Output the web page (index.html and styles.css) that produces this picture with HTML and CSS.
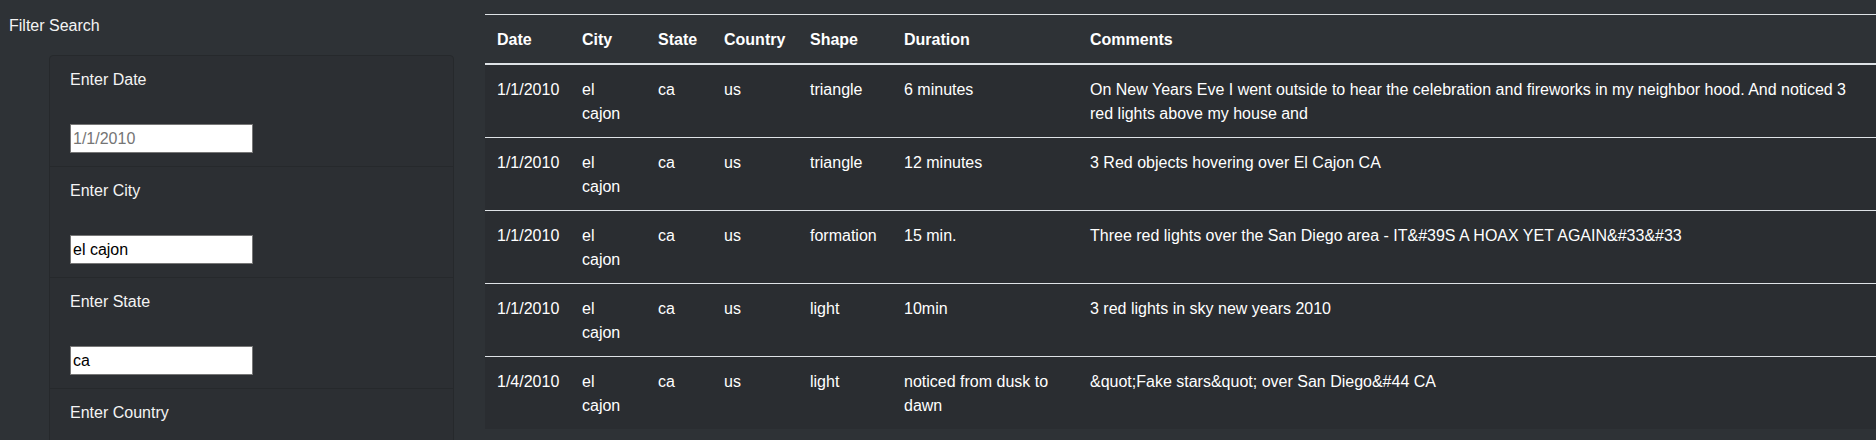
FILE: index.html
```html
<!DOCTYPE html>
<html lang="en">
<head>
<meta charset="utf-8">
<title>UFO Sightings</title>
<link rel="stylesheet" href="styles.css">
</head>
<body>
<div class="page">
  <aside class="sidebar">
    <h2 class="sidebar-title">Filter Search</h2>
    <ul class="filter-list">
      <li class="filter-item">
        <label class="filter-label" for="datetime">Enter Date</label>
        <input class="filter-input" id="datetime" type="text" placeholder="1/1/2010">
      </li>
      <li class="filter-item">
        <label class="filter-label" for="city">Enter City</label>
        <input class="filter-input" id="city" type="text" value="el cajon">
      </li>
      <li class="filter-item">
        <label class="filter-label" for="state">Enter State</label>
        <input class="filter-input" id="state" type="text" value="ca">
      </li>
      <li class="filter-item">
        <label class="filter-label" for="country">Enter Country</label>
        <input class="filter-input" id="country" type="text">
      </li>
    </ul>
  </aside>
  <main class="results">
    <table class="ufo-table">
      <colgroup>
        <col class="col-date">
        <col class="col-city">
        <col class="col-state">
        <col class="col-country">
        <col class="col-shape">
        <col class="col-duration">
        <col class="col-comments">
      </colgroup>
      <thead>
        <tr>
          <th>Date</th>
          <th>City</th>
          <th>State</th>
          <th>Country</th>
          <th>Shape</th>
          <th>Duration</th>
          <th>Comments</th>
        </tr>
      </thead>
      <tbody>
        <tr>
          <td>1/1/2010</td>
          <td>el cajon</td>
          <td>ca</td>
          <td>us</td>
          <td>triangle</td>
          <td>6 minutes</td>
          <td>On New Years Eve I went outside to hear the celebration and fireworks in my neighbor hood. And noticed 3 red lights above my house and</td>
        </tr>
        <tr>
          <td>1/1/2010</td>
          <td>el cajon</td>
          <td>ca</td>
          <td>us</td>
          <td>triangle</td>
          <td>12 minutes</td>
          <td>3 Red objects hovering over El Cajon CA</td>
        </tr>
        <tr>
          <td>1/1/2010</td>
          <td>el cajon</td>
          <td>ca</td>
          <td>us</td>
          <td>formation</td>
          <td>15 min.</td>
          <td>Three red lights over the San Diego area - IT&amp;#39S A HOAX YET AGAIN&amp;#33&amp;#33</td>
        </tr>
        <tr>
          <td>1/1/2010</td>
          <td>el cajon</td>
          <td>ca</td>
          <td>us</td>
          <td>light</td>
          <td>10min</td>
          <td>3 red lights in sky new years 2010</td>
        </tr>
        <tr>
          <td>1/4/2010</td>
          <td>el cajon</td>
          <td>ca</td>
          <td>us</td>
          <td>light</td>
          <td>noticed from dusk to dawn</td>
          <td>&amp;quot;Fake stars&amp;quot; over San Diego&amp;#44 CA</td>
        </tr>
      </tbody>
    </table>
  </main>
</div>
</body>
</html>
```

FILE: styles.css
```css
* {
  box-sizing: border-box;
}

html, body {
  margin: 0;
  padding: 0;
}

body {
  background: #2e3236;
  color: #ffffff;
  font-family: "Liberation Sans", Arial, Helvetica, sans-serif;
  font-size: 16px;
  line-height: 24px;
  overflow: hidden;
}

.page {
  display: flex;
  align-items: flex-start;
}

.sidebar {
  flex: none;
  width: 485px;
  padding-top: 14px;
}

.sidebar-title {
  margin: 0 0 17px 9px;
  font-size: 16px;
  font-weight: normal;
  line-height: 24px;
  color: #f4f4f4;
}

.filter-list {
  list-style: none;
  margin: 0 0 0 49px;
  padding: 0;
  width: 405px;
  background: #2c2f33;
  border: 1px solid #26292c;
  border-radius: 4px;
}

.filter-item {
  display: flex;
  flex-direction: column;
  align-items: flex-start;
  padding: 12px 20px 13px;
  border-bottom: 1px solid #26292c;
}

.filter-label {
  display: block;
  line-height: 24px;
  margin-bottom: 32px;
  color: #f4f4f4;
}

.filter-input {
  width: 183px;
  height: 29px;
  margin: 0;
  padding: 0 2px;
  border: 1px solid #767676;
  background: #ffffff;
  color: #000000;
  font-family: "Liberation Sans", Arial, Helvetica, sans-serif;
  font-size: 16px;
  outline: none;
}

.filter-input::placeholder {
  color: #757575;
}

.results {
  flex: 1;
  min-width: 0;
  margin-top: 14px;
}

.ufo-table {
  width: 100%;
  table-layout: fixed;
  border-collapse: collapse;
  color: #ffffff;
}

.col-date { width: 85px; }
.col-city { width: 76px; }
.col-state { width: 66px; }
.col-country { width: 86px; }
.col-shape { width: 94px; }
.col-duration { width: 186px; }

.ufo-table th,
.ufo-table td {
  padding: 13px 12px 11px;
  text-align: left;
  vertical-align: top;
  border-top: 1px solid #dee2e6;
  line-height: 24px;
}

.ufo-table th {
  font-weight: bold;
  border-bottom: 2px solid #dee2e6;
}

.ufo-table tbody {
  background: #2a2d31;
}
```
